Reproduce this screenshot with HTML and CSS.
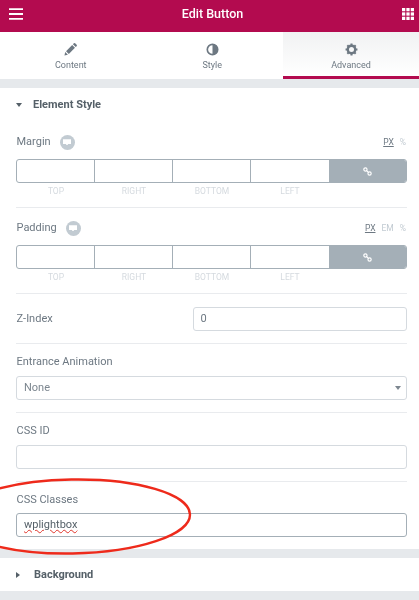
FILE: index.html
```html
<!DOCTYPE html>
<html lang="en">
<head>
<meta charset="utf-8">
<title>Edit Button</title>
<link rel="stylesheet" href="styles.css">
</head>
<body>
<div class="panel">
  <header class="topbar">
    <svg class="top-icon" viewBox="0 0 14 12" width="14" height="12"><path d="M0 1.2h14M0 6h14M0 10.8h14" stroke="#fff" stroke-width="1.8"/></svg>
    <div class="top-title">Edit Button</div>
    <svg class="top-icon" viewBox="0 0 11 11" width="12" height="12" fill="#fff"><rect x="0" y="0" width="3" height="3"/><rect x="4" y="0" width="3" height="3"/><rect x="8" y="0" width="3" height="3"/><rect x="0" y="4" width="3" height="3"/><rect x="4" y="4" width="3" height="3"/><rect x="8" y="4" width="3" height="3"/><rect x="0" y="8" width="3" height="3"/><rect x="4" y="8" width="3" height="3"/><rect x="8" y="8" width="3" height="3"/></svg>
  </header>
  <nav class="tabs">
    <div class="tab">
      <svg viewBox="0 0 14 14" width="13" height="13" fill="#6d7882"><path d="M0.5 13.5l0.8-3.8 2.9 2.9zM2.2 8.8l6.6-6.6 3 3-6.6 6.6zM9.6 1.4l1-1a1 1 0 0 1 1.4 0l1.6 1.6a1 1 0 0 1 0 1.4l-1 1z"/></svg>
      <span>Content</span>
    </div>
    <div class="tab">
      <svg viewBox="0 0 14 14" width="13" height="13"><circle cx="7" cy="7" r="5.6" fill="#fff" stroke="#6d7882" stroke-width="1.8"/><path d="M7 1.4a5.6 5.6 0 0 1 0 11.2z" fill="#6d7882"/></svg>
      <span>Style</span>
    </div>
    <div class="tab tab-active">
      <svg viewBox="0 0 14 14" width="13" height="13"><circle cx="7" cy="7" r="4" fill="none" stroke="#6d7882" stroke-width="2.6"/><path d="M7 .6v2.4M7 11v2.4M.6 7H3M11 7h2.4M2.5 2.5l1.7 1.7M9.8 9.8l1.7 1.7M11.5 2.5L9.8 4.2M4.2 9.8l-1.7 1.7" stroke="#6d7882" stroke-width="2.2"/></svg>
      <span>Advanced</span>
    </div>
  </nav>

  <section class="section section-open">
    <h2 class="section-head"><span class="caret-down"></span>Element Style</h2>
    <div class="section-body">
      <div class="control control-dim control-margin">
        <div class="dim-top">
          <span class="label">Margin</span>
          <span class="device"><svg viewBox="0 0 10 8" width="8" height="7" fill="#fff"><path d="M0 0h10v6H6v1H4V6H0z"/></svg></span>
          <span class="units"><u>PX</u><span class="unit-off">%</span></span>
        </div>
        <div class="dim-row">
          <div class="dim-cell"></div><div class="dim-cell"></div><div class="dim-cell"></div><div class="dim-cell"></div>
          <div class="dim-link"><svg viewBox="0 0 10 10" width="9" height="9" fill="none" stroke="#fff" stroke-width="1.3"><circle cx="2.7" cy="2.7" r="1.8"/><circle cx="7.3" cy="7.3" r="1.8"/><path d="M3.8 3.8l2.4 2.4"/></svg></div>
        </div>
        <div class="dim-labels"><span>TOP</span><span>RIGHT</span><span>BOTTOM</span><span>LEFT</span><span></span></div>
      </div>
      <div class="control control-dim control-padding">
        <div class="dim-top">
          <span class="label">Padding</span>
          <span class="device"><svg viewBox="0 0 10 8" width="8" height="7" fill="#fff"><path d="M0 0h10v6H6v1H4V6H0z"/></svg></span>
          <span class="units"><u>PX</u><span class="unit-off">EM</span><span class="unit-off">%</span></span>
        </div>
        <div class="dim-row">
          <div class="dim-cell"></div><div class="dim-cell"></div><div class="dim-cell"></div><div class="dim-cell"></div>
          <div class="dim-link"><svg viewBox="0 0 10 10" width="9" height="9" fill="none" stroke="#fff" stroke-width="1.3"><circle cx="2.7" cy="2.7" r="1.8"/><circle cx="7.3" cy="7.3" r="1.8"/><path d="M3.8 3.8l2.4 2.4"/></svg></div>
        </div>
        <div class="dim-labels"><span>TOP</span><span>RIGHT</span><span>BOTTOM</span><span>LEFT</span><span></span></div>
      </div>
      <div class="control control-z">
        <span class="label">Z-Index</span>
        <div class="field field-z">0</div>
      </div>
      <div class="control control-stack">
        <span class="label">Entrance Animation</span>
        <div class="field field-select">None<span class="select-arrow"></span></div>
      </div>
      <div class="control control-stack">
        <span class="label">CSS ID</span>
        <div class="field"></div>
      </div>
      <div class="control control-stack control-last">
        <span class="label">CSS Classes</span>
        <div class="field field-focus"><span class="misspelt">wplightbox</span></div>
      </div>
    </div>
  </section>

  <section class="section section-closed">
    <h2 class="section-head"><span class="caret-right"></span>Background</h2>
  </section>

  <svg class="annotation" viewBox="0 0 419 600" width="419" height="600" fill="none"><ellipse cx="72" cy="516.5" rx="118" ry="37" transform="rotate(-1 72 516.5)" stroke="#ee2a1b" stroke-width="2.4"/></svg>
</div>
</body>
</html>
```
FILE: styles.css
```css
* { box-sizing: border-box; }
html, body { margin: 0; padding: 0; }
body { width: 419px; height: 600px; overflow: hidden; background: #e6e9ec; font-family: Roboto, "Liberation Sans", sans-serif; color: #6d7882; }
.panel { position: relative; width: 419px; height: 600px; overflow: hidden; filter: blur(0.4px); }

.topbar { height: 32px; background: #b30b4f; display: flex; align-items: center; justify-content: space-between; padding: 0 5px 5px 9px; }
.top-title { color: #fff; font-size: 12.5px; font-weight: 500; }
.top-icon { display: block; }
.top-icon:last-child { margin-top: 1px; }

.tabs { height: 47px; display: grid; grid-template-columns: 141.5px 141.5px 136px; background: #fff; }
.tab { display: flex; flex-direction: column; align-items: center; padding-top: 11px; gap: 3px; font-size: 9px; line-height: 12px; color: #6d7882; }
.tab-active { background: linear-gradient(#f1f2f3, #fff); border-bottom: 3px solid #b30b4f; }

.section { background: #fff; }
.section-open { margin-top: 9px; height: 461px; }
.section-closed { margin-top: 9px; height: 33px; }
.section-head { margin: 0; display: flex; align-items: center; font-size: 11px; font-weight: 700; color: #556068; padding-left: 16px; }
.section-open .section-head { height: 32px; }
.section-closed .section-head { height: 33px; }
.caret-down { width: 0; height: 0; border-left: 3.5px solid transparent; border-right: 3.5px solid transparent; border-top: 4px solid #556068; margin-right: 11px; margin-top: 1px; }
.caret-right { width: 0; height: 0; border-top: 3.5px solid transparent; border-bottom: 3.5px solid transparent; border-left: 4px solid #556068; margin-right: 14px; }

.section-body { padding: 0 12px 0 16px; }
.label { font-size: 11px; line-height: 14px; color: #6d7882; padding-left: 0.5px; }
.control { border-bottom: 1px solid #e9ebee; }
.control-last { border-bottom: 0; }

.control-dim { height: 86px; padding-top: 13px; }
.control-margin { height: 88px; padding-top: 15px; }
.dim-top { display: flex; align-items: center; height: 14px; margin-bottom: 10px; }
.device { width: 15px; height: 15px; margin-left: 9px; border-radius: 50%; background: #c2cbd2; display: flex; align-items: center; justify-content: center; }
.units { margin-left: auto; margin-right: 1px; display: flex; gap: 6px; font-size: 8.5px; color: #6d7882; }
.unit-off { color: #c2cbd2; }

.dim-row { display: grid; grid-template-columns: 78px 78px 78px 78px 1fr; height: 24px; border: 1px solid #a4afb7; border-radius: 3px; overflow: hidden; }
.dim-cell { border-right: 1px solid #a4afb7; }
.dim-cell:nth-child(4) { border-right: 0; }
.dim-link { background: #a4afb7; display: flex; align-items: center; justify-content: center; }
.dim-labels { display: grid; grid-template-columns: 78px 78px 78px 78px 1fr; font-size: 8.5px; line-height: 10px; margin-top: 3px; padding-left: 1px; color: #d5dadf; text-align: center; }

.control-z { height: 50px; padding-top: 13px; display: flex; justify-content: space-between; align-items: flex-start; }
.control-z .label { margin-top: 4.5px; }
.control-stack { padding-top: 11px; height: 69px; }
.control-stack .label { display: block; margin-bottom: 7px; }
.control-stack.control-last { height: 67px; }
.control-last .label { margin-bottom: 6px; }

.field { height: 24px; border: 1px solid #d5dadf; border-radius: 3px; background: #fff; font-size: 11px; line-height: 22px; padding-left: 7px; color: #6d7882; position: relative; }
.field-z { width: 214.5px; }
.field-select { color: #7d8790; }
.select-arrow { position: absolute; right: 5px; top: 9px; width: 0; height: 0; border-left: 3.5px solid transparent; border-right: 3.5px solid transparent; border-top: 4px solid #7d8790; }
.field-focus { border-color: #a4afb7; color: #556068; }
.misspelt { text-decoration: underline wavy #e0352b 1px; text-underline-offset: 1px; }

.annotation { position: absolute; left: 0; top: 0; pointer-events: none; }
```
